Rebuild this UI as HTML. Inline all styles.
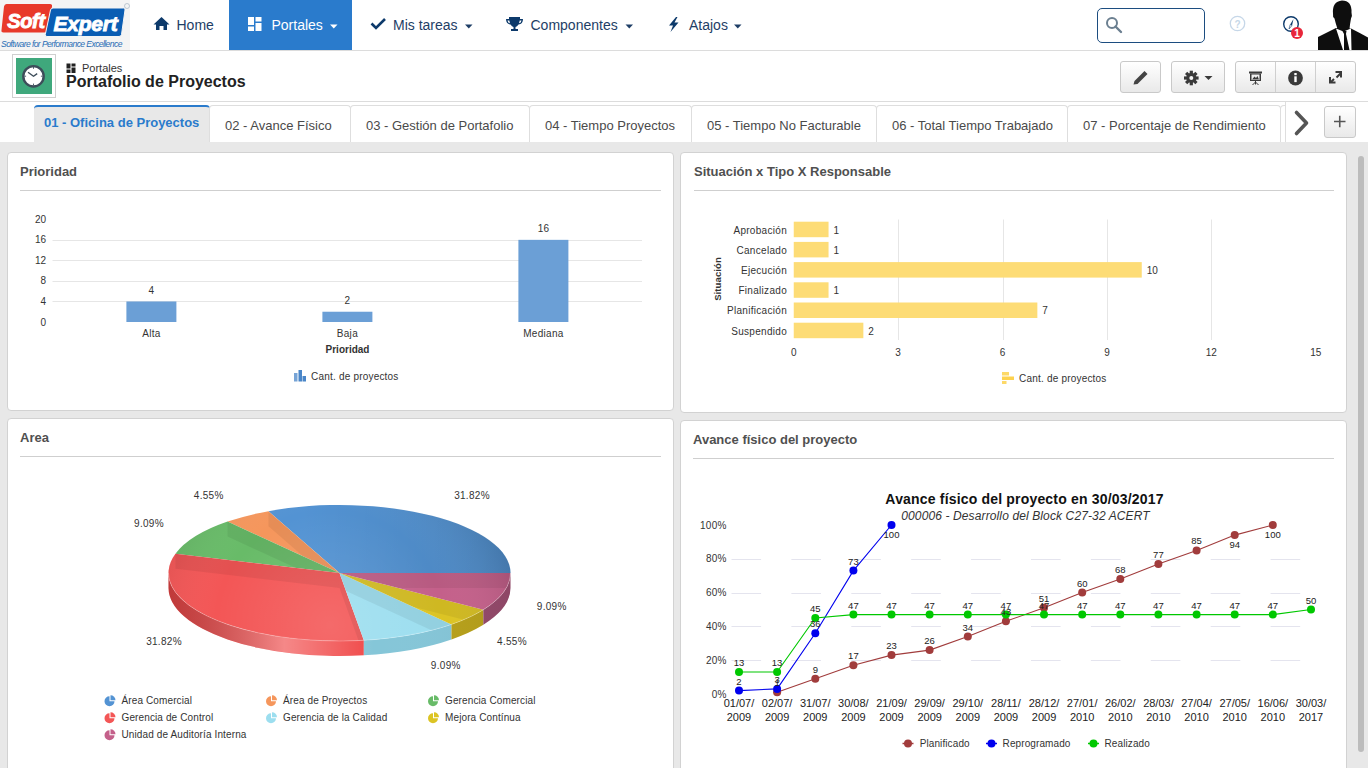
<!DOCTYPE html><html><head><meta charset="utf-8"><title>Portafolio de Proyectos</title><style>
*{margin:0;padding:0;box-sizing:border-box}
html,body{width:1368px;height:768px;overflow:hidden;background:#fff;font-family:"Liberation Sans",sans-serif}
.a{position:absolute}
.btn{position:absolute;background:linear-gradient(#ffffff,#e9e9e9);border:1px solid #c9c9c9;border-radius:3px}
.panel{position:absolute;background:#fff;border:1px solid #d2d2d2;border-radius:4px}
svg text{font-family:"Liberation Sans",sans-serif}
</style></head><body>
<div class="a" style="left:0;top:0;width:1368px;height:51px;background:#fff;border-bottom:1px solid #dcdcdc"></div>
<div class="a" style="left:0;top:0;width:130px;height:50px;background:#f4f4f4"></div>
<div class="a" style="left:229px;top:0;width:123px;height:50px;background:#2a7bcc"></div>
<div class="a" style="left:0;top:101px;width:1368px;height:1px;background:#dcdcdc"></div>
<div class="a" style="left:0;top:142px;width:1368px;height:626px;background:#e8e8e8"></div>
<div class="panel" style="left:7px;top:152px;width:667px;height:259px"></div>
<div class="panel" style="left:680px;top:152px;width:667px;height:261px"></div>
<div class="panel" style="left:7px;top:418px;width:667px;height:360px"></div>
<div class="panel" style="left:680px;top:420px;width:667px;height:360px"></div>
<div class="a" style="left:1358px;top:156px;width:6px;height:596px;background:#bcbcbc;border-radius:3px"></div>
<div class="btn" style="left:1120px;top:61px;width:41px;height:32px"></div>
<div class="btn" style="left:1171px;top:61px;width:54px;height:32px"></div>
<div class="btn" style="left:1235px;top:61px;width:121px;height:32px"></div>
<div class="a" style="left:1275px;top:62px;width:1px;height:30px;background:#cfcfcf"></div>
<div class="a" style="left:1315px;top:62px;width:1px;height:30px;background:#cfcfcf"></div>
<div class="btn" style="left:1324px;top:106px;width:32px;height:32px"></div>
<div class="a" style="left:1097px;top:8px;width:108px;height:35px;border:1.5px solid #1c4d80;border-radius:5px;background:#fff"></div>
<div class="a" style="left:12px;top:54px;width:44px;height:44px;border:1px solid #cfcfcf;background:#fff"></div>
<div class="a" style="left:16px;top:58px;width:36px;height:36px;background:#3fa87c"></div>
<div class="a" style="left:34px;top:105px;width:176px;height:37px;background:#e8e8e8;border-top:2px solid #2a7bcc;border-radius:4px 4px 0 0"></div>
<div class="a" style="left:209px;top:105px;width:142px;height:37px;background:#fff;border:1px solid #dedede;border-bottom:none;border-radius:4px 4px 0 0"></div>
<div class="a" style="left:350px;top:105px;width:180px;height:37px;background:#fff;border:1px solid #dedede;border-bottom:none;border-radius:4px 4px 0 0"></div>
<div class="a" style="left:529px;top:105px;width:163px;height:37px;background:#fff;border:1px solid #dedede;border-bottom:none;border-radius:4px 4px 0 0"></div>
<div class="a" style="left:691px;top:105px;width:186px;height:37px;background:#fff;border:1px solid #dedede;border-bottom:none;border-radius:4px 4px 0 0"></div>
<div class="a" style="left:876px;top:105px;width:192px;height:37px;background:#fff;border:1px solid #dedede;border-bottom:none;border-radius:4px 4px 0 0"></div>
<div class="a" style="left:1067px;top:105px;width:214px;height:37px;background:#fff;border:1px solid #dedede;border-bottom:none;border-radius:4px 4px 0 0"></div>
<div class="a" style="left:1280px;top:105px;width:121px;height:37px;background:#fff;border:1px solid #dedede;border-bottom:none;border-radius:4px 4px 0 0"></div>
<div class="a" style="left:1285px;top:102px;width:83px;height:40px;background:#fff;border-left:1px solid #dedede"></div>
<div class="btn" style="left:1324px;top:106px;width:32px;height:32px"></div>
<svg class="a" style="left:0;top:0" width="1368" height="768" viewBox="0 0 1368 768">
<path d="M6.5,4 H50 Q52.5,4 52,6.5 L47.5,30 Q47,32.5 44.5,32.5 H3.5 Q1,32.5 1.5,30 L4,6.5 Q4.5,4 6.5,4Z" fill="#e8392a"/>
<path d="M53,8 H123.5 Q125.5,8 125,10 L121.5,34.5 Q121,36.5 119,36.5 H47 Q45,36.5 45.3,34.5 L50.5,10 Q51,8 53,8Z" fill="#0a5db3" stroke="#f4f4f4" stroke-width="1"/>
<text x="26" y="27.5" font-size="20" fill="#fff" text-anchor="middle" font-weight="bold" font-style="italic" letter-spacing="-0.3" stroke="#fff" stroke-width="0.9">Soft</text>
<text x="85.5" y="30.5" font-size="21" fill="#fff" text-anchor="middle" font-weight="bold" font-style="italic" letter-spacing="-0.2" stroke="#fff" stroke-width="0.9">Expert</text>
<text x="1" y="46.5" font-size="8.6" fill="#2a6db5" text-anchor="start" font-weight="normal" font-style="italic" letter-spacing="-0.6">Software for Performance Excellence</text>
<circle cx="127" cy="6" r="2.5" fill="none" stroke="#9ab" stroke-width="0.6"/>
<path d="M161.5,17 L153.5,24.5 L156,24.5 L156,30 L159.5,30 L159.5,26 L163.5,26 L163.5,30 L167,30 L167,24.5 L169.5,24.5 Z" fill="#0d3a6b"/>
<text x="176.5" y="30" font-size="14" fill="#1e3e66" text-anchor="start" font-weight="normal" font-style="normal" >Home</text>
<g fill="#fff"><rect x="248" y="17" width="6" height="8"/><rect x="255.5" y="17" width="6" height="4.5"/><rect x="255.5" y="23" width="6" height="8"/><rect x="248" y="26.5" width="6" height="4.5"/></g>
<text x="271.5" y="30" font-size="14" fill="#fff" text-anchor="start" font-weight="normal" font-style="normal" >Portales</text>
<path d="M330,24.5 L337.5,24.5 L333.75,28.5Z" fill="#fff"/>
<path d="M371.5,23.5 L376,28 L385,19" fill="none" stroke="#0d3a6b" stroke-width="2.6"/>
<text x="393" y="30" font-size="14" fill="#1e3e66" text-anchor="start" font-weight="normal" font-style="normal" >Mis tareas</text>
<path d="M465,24.5 L472.5,24.5 L468.75,28.5Z" fill="#1e3e66"/>
<path d="M509,17 L520,17 L520,19 L523,19 Q523,24 518.5,24.5 Q517,26.5 515.5,27 L515.5,29 L518,29 L518,31 L511,31 L511,29 L513.5,29 L513.5,27 Q512,26.5 510.5,24.5 Q506,24 506,19 L509,19Z M507.5,20.5 Q507.8,23 510,23.2 L509.3,20.5Z M521.5,20.5 L519.7,20.5 L519,23.2 Q521.2,23 521.5,20.5Z" fill="#0d3a6b" fill-rule="evenodd"/>
<text x="530.5" y="30" font-size="14" fill="#1e3e66" text-anchor="start" font-weight="normal" font-style="normal" >Componentes</text>
<path d="M625.5,24.5 L633,24.5 L629.25,28.5Z" fill="#1e3e66"/>
<path d="M676,17 L669,25.5 L673,25.5 L670.5,32 L678.5,22.5 L674.5,22.5 L677.5,17Z" fill="#0d3a6b"/>
<text x="689" y="30" font-size="14" fill="#1e3e66" text-anchor="start" font-weight="normal" font-style="normal" >Atajos</text>
<path d="M734,24.5 L741.5,24.5 L737.75,28.5Z" fill="#1e3e66"/>
<circle cx="1112" cy="23" r="5" fill="none" stroke="#6b7f90" stroke-width="2"/><path d="M1115.5,26.5 L1121,32" stroke="#6b7f90" stroke-width="2.4" stroke-linecap="round"/>
<circle cx="1237.5" cy="23.5" r="7.2" fill="none" stroke="#c6d7e8" stroke-width="1.3"/>
<text x="1237.5" y="27.5" font-size="10" fill="#c6d7e8" text-anchor="middle" font-weight="bold" font-style="normal" >?</text>
<circle cx="1291" cy="24" r="7.3" fill="none" stroke="#0d3a6b" stroke-width="1.4"/><path d="M1293.5,19 L1290.2,24.5 L1292,25.5Z" fill="#0d3a6b"/><path d="M1290.2,24.5 L1289,29 L1292,25.5Z" fill="#fff" stroke="#0d3a6b" stroke-width="0.6"/>
<circle cx="1297" cy="33" r="6" fill="#e8263a"/>
<text x="1297" y="36.8" font-size="10" fill="#fff" text-anchor="middle" font-weight="bold" font-style="normal" >1</text>
<path d="M1318,50 V37 Q1326,33 1336,28 L1351,28.5 Q1360,33 1368,37.5 V50Z" fill="#0e0e0e"/>
<path d="M1337.5,29 Q1335.5,23 1334.5,18.5 Q1332.5,17 1333,13.5 Q1332,1.5 1342,0.5 Q1352,0.5 1351.5,12.5 Q1352.5,16 1351,18.5 Q1350,23.5 1349.5,29 Q1344,31 1337.5,29Z" fill="#0e0e0e"/>
<path d="M1336,28.5 L1343.5,31.5 L1351,28.5 L1351.5,50 L1343,50Z" fill="#fff"/><path d="M1342.5,31 L1346.5,31 L1346,34 L1349.5,50 L1344,50 L1344,34Z" fill="#0e0e0e"/>
<circle cx="33.5" cy="76.3" r="10.2" fill="#fff" stroke="#3d4d5a" stroke-width="2.4"/>
<path d="M28,72.3 L33.5,76.2 L37.2,73.6" fill="none" stroke="#3d4d5a" stroke-width="1.4" stroke-linejoin="round"/>
<g stroke="#3d4d5a" stroke-width="0.9"><path d="M33.5,67 V68.8"/><path d="M33.5,83.6 V85.4"/><path d="M24.3,76.2 H26.1"/><path d="M40.9,76.2 H42.7"/></g>
<g fill="#222"><rect x="66.5" y="63.5" width="4" height="5"/><rect x="71.5" y="63.5" width="4" height="3"/><rect x="71.5" y="67.5" width="4" height="5.5"/><rect x="66.5" y="69.5" width="4" height="3.5"/></g>
<text x="82" y="71.7" font-size="11" fill="#333" text-anchor="start" font-weight="normal" font-style="normal" >Portales</text>
<text x="66" y="87" font-size="16" fill="#222" text-anchor="start" font-weight="bold" font-style="normal" >Portafolio de Proyectos</text>
<path d="M1133.5,84.5 L1134.5,81 L1144.5,71 L1147.5,74 L1137.5,84 Z" fill="#444"/>
<g fill="#3a3a3a"><rect x="1189.7" y="70.7" width="3.2" height="3.5" transform="rotate(0 1191.3 78)"/><rect x="1189.7" y="70.7" width="3.2" height="3.5" transform="rotate(45 1191.3 78)"/><rect x="1189.7" y="70.7" width="3.2" height="3.5" transform="rotate(90 1191.3 78)"/><rect x="1189.7" y="70.7" width="3.2" height="3.5" transform="rotate(135 1191.3 78)"/><rect x="1189.7" y="70.7" width="3.2" height="3.5" transform="rotate(180 1191.3 78)"/><rect x="1189.7" y="70.7" width="3.2" height="3.5" transform="rotate(225 1191.3 78)"/><rect x="1189.7" y="70.7" width="3.2" height="3.5" transform="rotate(270 1191.3 78)"/><rect x="1189.7" y="70.7" width="3.2" height="3.5" transform="rotate(315 1191.3 78)"/><circle cx="1191.3" cy="78" r="5"/></g><circle cx="1191.3" cy="78" r="2" fill="#f3f3f3"/>
<path d="M1204.5,76 L1212.5,76 L1208.5,80Z" fill="#3a3a3a"/>
<g fill="#3a3a3a"><rect x="1249" y="71.5" width="13" height="2"/><rect x="1250" y="73.5" width="11" height="7.5"/></g><rect x="1251.5" y="74.5" width="8" height="5.5" fill="#f0f0f0"/><path d="M1252,79.5 L1254.5,76.5 L1256,78 L1257.5,76 L1259,79.5Z" fill="#3a3a3a"/><path d="M1255.5,81 V84.5 M1255.5,82 L1252.5,85 M1255.5,82 L1258.5,85" stroke="#3a3a3a" stroke-width="1"/>
<circle cx="1295.5" cy="78" r="7.4" fill="#3a3a3a"/><rect x="1294.3" y="73" width="2.4" height="2.2" fill="#fff"/><rect x="1294.3" y="76.3" width="2.4" height="5.8" fill="#fff"/>
<g fill="none" stroke="#3a3a3a" stroke-width="2"><path d="M1336.5,77.5 L1340.5,73.5"/><path d="M1335.5,72 H1341 V77.5"/><path d="M1334,79 L1331,82"/><path d="M1330,77 V82.5 H1335.5"/></g>
<text x="44" y="127" font-size="13" fill="#2a7bcc" text-anchor="start" font-weight="bold" font-style="normal" >01 - Oficina de Proyectos</text>
<text x="225" y="130" font-size="13" fill="#4a4a4a" text-anchor="start" font-weight="normal" font-style="normal" >02 - Avance Físico</text>
<text x="366" y="130" font-size="13" fill="#4a4a4a" text-anchor="start" font-weight="normal" font-style="normal" >03 - Gestión de Portafolio</text>
<text x="545" y="130" font-size="13" fill="#4a4a4a" text-anchor="start" font-weight="normal" font-style="normal" >04 - Tiempo Proyectos</text>
<text x="707" y="130" font-size="13" fill="#4a4a4a" text-anchor="start" font-weight="normal" font-style="normal" >05 - Tiempo No Facturable</text>
<text x="892" y="130" font-size="13" fill="#4a4a4a" text-anchor="start" font-weight="normal" font-style="normal" >06 - Total Tiempo Trabajado</text>
<text x="1083" y="130" font-size="13" fill="#4a4a4a" text-anchor="start" font-weight="normal" font-style="normal" >07 - Porcentaje de Rendimiento</text>
<path d="M1296.5,112.5 L1306.5,123 L1296.5,133.5" fill="none" stroke="#555" stroke-width="3.6" stroke-linecap="round" stroke-linejoin="round"/>
<path d="M1334,121.5 H1345.5 M1339.75,115.8 V127.2" stroke="#555" stroke-width="1.6"/>
<text x="20" y="176" font-size="13" fill="#505050" text-anchor="start" font-weight="bold" font-style="normal" >Prioridad</text>
<rect x="20" y="190" width="641" height="1" fill="#cfcfcf"/>
<text x="694" y="176" font-size="13" fill="#505050" text-anchor="start" font-weight="bold" font-style="normal" >Situación x Tipo X Responsable</text>
<rect x="694" y="190" width="640" height="1" fill="#cfcfcf"/>
<text x="20" y="442" font-size="13" fill="#505050" text-anchor="start" font-weight="bold" font-style="normal" >Area</text>
<rect x="20" y="456" width="641" height="1" fill="#cfcfcf"/>
<text x="693" y="444" font-size="13" fill="#505050" text-anchor="start" font-weight="bold" font-style="normal" >Avance físico del proyecto</text>
<rect x="693" y="458" width="641" height="1" fill="#cfcfcf"/>
<path d="M52.5,301.5 H642" stroke="#e6e6e6" stroke-width="1"/>
<path d="M52.5,281.5 H642" stroke="#e6e6e6" stroke-width="1"/>
<path d="M52.5,260.5 H642" stroke="#e6e6e6" stroke-width="1"/>
<path d="M52.5,240.5 H642" stroke="#e6e6e6" stroke-width="1"/>
<text x="46" y="325.5" font-size="10" fill="#333" text-anchor="end" font-weight="normal" font-style="normal" >0</text>
<text x="46" y="304.96" font-size="10" fill="#333" text-anchor="end" font-weight="normal" font-style="normal" >4</text>
<text x="46" y="284.42" font-size="10" fill="#333" text-anchor="end" font-weight="normal" font-style="normal" >8</text>
<text x="46" y="263.88" font-size="10" fill="#333" text-anchor="end" font-weight="normal" font-style="normal" >12</text>
<text x="46" y="243.34" font-size="10" fill="#333" text-anchor="end" font-weight="normal" font-style="normal" >16</text>
<text x="46" y="222.8" font-size="10" fill="#333" text-anchor="end" font-weight="normal" font-style="normal" >20</text>
<rect x="126.4" y="301.46" width="50" height="20.54" fill="#6b9fd6"/>
<text x="151.4" y="293.96" font-size="10" fill="#333" text-anchor="middle" font-weight="normal" font-style="normal" >4</text>
<text x="151.4" y="336.5" font-size="10" fill="#333" text-anchor="middle" font-weight="normal" font-style="normal" letter-spacing="0.3">Alta</text>
<rect x="322.4" y="311.73" width="50" height="10.27" fill="#6b9fd6"/>
<text x="347.4" y="304.23" font-size="10" fill="#333" text-anchor="middle" font-weight="normal" font-style="normal" >2</text>
<text x="347.4" y="336.5" font-size="10" fill="#333" text-anchor="middle" font-weight="normal" font-style="normal" letter-spacing="0.3">Baja</text>
<rect x="518.4" y="239.84" width="50" height="82.16" fill="#6b9fd6"/>
<text x="543.4" y="232.34" font-size="10" fill="#333" text-anchor="middle" font-weight="normal" font-style="normal" >16</text>
<text x="543.4" y="336.5" font-size="10" fill="#333" text-anchor="middle" font-weight="normal" font-style="normal" letter-spacing="0.3">Mediana</text>
<text x="347.5" y="353" font-size="10" fill="#333" text-anchor="middle" font-weight="bold" font-style="normal" >Prioridad</text>
<g fill="#4a86c8"><rect x="294" y="373" width="3.5" height="8.5" opacity="0.75"/><rect x="298.5" y="370" width="3.5" height="11.5"/><rect x="302.5" y="376" width="3.5" height="5.5"/></g>
<text x="311" y="380" font-size="10" fill="#333" text-anchor="start" font-weight="normal" font-style="normal" letter-spacing="0.2">Cant. de proyectos</text>
<path d="M898.5,219.5 V340" stroke="#e6e6e6" stroke-width="1"/>
<path d="M1003.5,219.5 V340" stroke="#e6e6e6" stroke-width="1"/>
<path d="M1107.5,219.5 V340" stroke="#e6e6e6" stroke-width="1"/>
<path d="M1211.5,219.5 V340" stroke="#e6e6e6" stroke-width="1"/>
<text x="793.75" y="355.5" font-size="10" fill="#333" text-anchor="middle" font-weight="normal" font-style="normal" >0</text>
<text x="898.15" y="355.5" font-size="10" fill="#333" text-anchor="middle" font-weight="normal" font-style="normal" >3</text>
<text x="1002.55" y="355.5" font-size="10" fill="#333" text-anchor="middle" font-weight="normal" font-style="normal" >6</text>
<text x="1106.95" y="355.5" font-size="10" fill="#333" text-anchor="middle" font-weight="normal" font-style="normal" >9</text>
<text x="1211.35" y="355.5" font-size="10" fill="#333" text-anchor="middle" font-weight="normal" font-style="normal" >12</text>
<text x="1315.75" y="355.5" font-size="10" fill="#333" text-anchor="middle" font-weight="normal" font-style="normal" >15</text>
<rect x="793.75" y="221.7" width="34.8" height="15.5" fill="#fddc76"/>
<text x="787" y="233.5" font-size="10" fill="#333" text-anchor="end" font-weight="normal" font-style="normal" letter-spacing="0.3">Aprobación</text>
<text x="833.55" y="233.5" font-size="10" fill="#333" text-anchor="start" font-weight="normal" font-style="normal" >1</text>
<rect x="793.75" y="241.9" width="34.8" height="15.5" fill="#fddc76"/>
<text x="787" y="253.7" font-size="10" fill="#333" text-anchor="end" font-weight="normal" font-style="normal" letter-spacing="0.3">Cancelado</text>
<text x="833.55" y="253.7" font-size="10" fill="#333" text-anchor="start" font-weight="normal" font-style="normal" >1</text>
<rect x="793.75" y="262.1" width="348.0" height="15.5" fill="#fddc76"/>
<text x="787" y="273.9" font-size="10" fill="#333" text-anchor="end" font-weight="normal" font-style="normal" letter-spacing="0.3">Ejecución</text>
<text x="1146.75" y="273.9" font-size="10" fill="#333" text-anchor="start" font-weight="normal" font-style="normal" >10</text>
<rect x="793.75" y="282.3" width="34.8" height="15.5" fill="#fddc76"/>
<text x="787" y="294.09999999999997" font-size="10" fill="#333" text-anchor="end" font-weight="normal" font-style="normal" letter-spacing="0.3">Finalizado</text>
<text x="833.55" y="294.09999999999997" font-size="10" fill="#333" text-anchor="start" font-weight="normal" font-style="normal" >1</text>
<rect x="793.75" y="302.5" width="243.6" height="15.5" fill="#fddc76"/>
<text x="787" y="314.3" font-size="10" fill="#333" text-anchor="end" font-weight="normal" font-style="normal" letter-spacing="0.3">Planificación</text>
<text x="1042.35" y="314.3" font-size="10" fill="#333" text-anchor="start" font-weight="normal" font-style="normal" >7</text>
<rect x="793.75" y="322.7" width="69.6" height="15.5" fill="#fddc76"/>
<text x="787" y="334.5" font-size="10" fill="#333" text-anchor="end" font-weight="normal" font-style="normal" letter-spacing="0.3">Suspendido</text>
<text x="868.35" y="334.5" font-size="10" fill="#333" text-anchor="start" font-weight="normal" font-style="normal" >2</text>
<text x="721" y="279" font-size="9.5" font-weight="bold" fill="#333" letter-spacing="0.1" text-anchor="middle" transform="rotate(-90 721 279)">Situación</text>
<g fill="#fdd24e"><rect x="1002" y="372" width="7" height="3.5" opacity="0.85"/><rect x="1002" y="376.5" width="12" height="3.5"/><rect x="1002" y="381" width="4.5" height="3" opacity="0.85"/></g>
<text x="1019" y="382" font-size="10" fill="#333" text-anchor="start" font-weight="normal" font-style="normal" letter-spacing="0.2">Cant. de proyectos</text>
<defs><linearGradient id="sideg" gradientUnits="userSpaceOnUse" x1="168" x2="511" y1="0" y2="0"><stop offset="0" stop-color="#000" stop-opacity="0.2"/><stop offset="0.34" stop-color="#fff" stop-opacity="0.35"/><stop offset="0.6" stop-color="#fff" stop-opacity="0"/><stop offset="1" stop-color="#000" stop-opacity="0.05"/></linearGradient><radialGradient id="topg" gradientUnits="userSpaceOnUse" cx="330" cy="625" r="190"><stop offset="0" stop-color="#fff" stop-opacity="0.12"/><stop offset="0.6" stop-color="#fff" stop-opacity="0"/><stop offset="1" stop-color="#000" stop-opacity="0.1"/></radialGradient></defs>
<path d="M168.50,573.00 A171.0,68.0 0 0 0 363.84,640.31 L363.84,655.31 A171.0,68.0 0 0 1 168.50,588.00 Z" fill="#f04848"/>
<path d="M363.84,640.31 A171.0,68.0 0 0 0 451.48,624.39 L451.48,639.39 A171.0,68.0 0 0 1 363.84,655.31 Z" fill="#85c6d8"/>
<path d="M451.48,624.39 A171.0,68.0 0 0 0 483.35,609.76 L483.35,624.76 A171.0,68.0 0 0 1 451.48,639.39 Z" fill="#b8a11a"/>
<path d="M483.35,609.76 A171.0,68.0 0 0 0 510.50,573.00 L510.50,588.00 A171.0,68.0 0 0 1 483.35,624.76 Z" fill="#954a6b"/>
<path d="M168.5,573.0 A171.0,68.0 0 0 0 510.5,573.0 L510.5,588.0 A171.0,68.0 0 0 1 168.5,588.0 Z" fill="url(#sideg)"/>
<path d="M339.5,573.0 L510.50,573.00 A171.0,68.0 0 0 0 268.46,511.15 Z" fill="#5393d3"/>
<path d="M339.5,573.0 L268.46,511.15 A171.0,68.0 0 0 0 227.52,521.61 Z" fill="#f5965c"/>
<path d="M339.5,573.0 L227.52,521.61 A171.0,68.0 0 0 0 175.43,553.84 Z" fill="#68bb68"/>
<path d="M339.5,573.0 L175.43,553.84 A171.0,68.0 0 0 0 363.84,640.31 Z" fill="#f35656"/>
<path d="M339.5,573.0 L363.84,640.31 A171.0,68.0 0 0 0 451.48,624.39 Z" fill="#9cdeef"/>
<path d="M339.5,573.0 L451.48,624.39 A171.0,68.0 0 0 0 483.35,609.76 Z" fill="#dcc424"/>
<path d="M339.5,573.0 L483.35,609.76 A171.0,68.0 0 0 0 510.50,573.00 Z" fill="#c4608a"/>
<ellipse cx="339.5" cy="573.0" rx="171.0" ry="68.0" fill="url(#topg)"/>
<defs><linearGradient id="topg2" gradientUnits="userSpaceOnUse" x1="300" x2="511" y1="0" y2="0"><stop offset="0" stop-color="#000" stop-opacity="0"/><stop offset="1" stop-color="#000" stop-opacity="0.1"/></linearGradient></defs><path d="M339.5,573.0 L510.5,573.0 A171.0,68.0 0 0 0 267.7,511.1 Z" fill="url(#topg2)"/>
<defs><clipPath id="cl0"><path d="M339.5,573.0 L510.50,573.00 A171.0,68.0 0 0 0 268.46,511.15 Z"/></clipPath><clipPath id="cl1"><path d="M339.5,573.0 L268.46,511.15 A171.0,68.0 0 0 0 227.52,521.61 Z"/></clipPath><clipPath id="cl2"><path d="M339.5,573.0 L227.52,521.61 A171.0,68.0 0 0 0 175.43,553.84 Z"/></clipPath><clipPath id="cl3"><path d="M339.5,573.0 L175.43,553.84 A171.0,68.0 0 0 0 363.84,640.31 Z"/></clipPath><clipPath id="cl4"><path d="M339.5,573.0 L363.84,640.31 A171.0,68.0 0 0 0 451.48,624.39 Z"/></clipPath><clipPath id="cl5"><path d="M339.5,573.0 L451.48,624.39 A171.0,68.0 0 0 0 483.35,609.76 Z"/></clipPath><clipPath id="cl6"><path d="M339.5,573.0 L483.35,609.76 A171.0,68.0 0 0 0 510.50,573.00 Z"/></clipPath></defs>
<path clip-path="url(#cl6)" d="M339.5,573.0 L510.50,573.00 L510.50,588.00 L339.5,588.0 Z" fill="#000" fill-opacity="0.06"/>
<path clip-path="url(#cl1)" d="M339.5,573.0 L268.46,511.15 L268.46,526.15 L339.5,588.0 Z" fill="#000" fill-opacity="0.06"/>
<path clip-path="url(#cl2)" d="M339.5,573.0 L227.52,521.61 L227.52,536.61 L339.5,588.0 Z" fill="#000" fill-opacity="0.06"/>
<path clip-path="url(#cl3)" d="M339.5,573.0 L175.43,553.84 L175.43,568.84 L339.5,588.0 Z" fill="#000" fill-opacity="0.06"/>
<path clip-path="url(#cl3)" d="M339.5,573.0 L363.84,640.31 L363.84,655.31 L339.5,588.0 Z" fill="#000" fill-opacity="0.06"/>
<path clip-path="url(#cl4)" d="M339.5,573.0 L451.48,624.39 L451.48,639.39 L339.5,588.0 Z" fill="#000" fill-opacity="0.06"/>
<path clip-path="url(#cl5)" d="M339.5,573.0 L483.35,609.76 L483.35,624.76 L339.5,588.0 Z" fill="#000" fill-opacity="0.06"/>
<path d="M168.5,573.0 A171.0,68.0 0 0 0 510.5,573.0" fill="none" stroke="#fff" stroke-opacity="0.25" stroke-width="1"/>
<text x="472" y="499" font-size="10" fill="#333" text-anchor="middle" font-weight="normal" font-style="normal" letter-spacing="0.3">31.82%</text>
<text x="208.7" y="499" font-size="10" fill="#333" text-anchor="middle" font-weight="normal" font-style="normal" letter-spacing="0.3">4.55%</text>
<text x="149" y="527" font-size="10" fill="#333" text-anchor="middle" font-weight="normal" font-style="normal" letter-spacing="0.3">9.09%</text>
<text x="551.7" y="610" font-size="10" fill="#333" text-anchor="middle" font-weight="normal" font-style="normal" letter-spacing="0.3">9.09%</text>
<text x="512" y="645" font-size="10" fill="#333" text-anchor="middle" font-weight="normal" font-style="normal" letter-spacing="0.3">4.55%</text>
<text x="445.8" y="668.5" font-size="10" fill="#333" text-anchor="middle" font-weight="normal" font-style="normal" letter-spacing="0.3">9.09%</text>
<text x="164" y="645" font-size="10" fill="#333" text-anchor="middle" font-weight="normal" font-style="normal" letter-spacing="0.3">31.82%</text>
<path d="M109.5,701.3 L109.5,696.3 A5,5 0 1 0 114.5,701.3 Z" fill="#5393d3"/><path d="M110.5,700.3 L110.5,695.3 A5,5 0 0 1 115.5,700.3 Z" fill="#5393d3"/>
<text x="121.5" y="704.0" font-size="10" fill="#333" text-anchor="start" font-weight="normal" font-style="normal" letter-spacing="0.12">Área Comercial</text>
<path d="M271,701.3 L271,696.3 A5,5 0 1 0 276,701.3 Z" fill="#f5965c"/><path d="M272,700.3 L272,695.3 A5,5 0 0 1 277,700.3 Z" fill="#f5965c"/>
<text x="283" y="704.0" font-size="10" fill="#333" text-anchor="start" font-weight="normal" font-style="normal" letter-spacing="0.12">Área de Proyectos</text>
<path d="M433,701.3 L433,696.3 A5,5 0 1 0 438,701.3 Z" fill="#68bb68"/><path d="M434,700.3 L434,695.3 A5,5 0 0 1 439,700.3 Z" fill="#68bb68"/>
<text x="445" y="704.0" font-size="10" fill="#333" text-anchor="start" font-weight="normal" font-style="normal" letter-spacing="0.12">Gerencia Comercial</text>
<path d="M109.5,718.3 L109.5,713.3 A5,5 0 1 0 114.5,718.3 Z" fill="#f35656"/><path d="M110.5,717.3 L110.5,712.3 A5,5 0 0 1 115.5,717.3 Z" fill="#f35656"/>
<text x="121.5" y="721.0" font-size="10" fill="#333" text-anchor="start" font-weight="normal" font-style="normal" letter-spacing="0.12">Gerencia de Control</text>
<path d="M271,718.3 L271,713.3 A5,5 0 1 0 276,718.3 Z" fill="#9cdeef"/><path d="M272,717.3 L272,712.3 A5,5 0 0 1 277,717.3 Z" fill="#9cdeef"/>
<text x="283" y="721.0" font-size="10" fill="#333" text-anchor="start" font-weight="normal" font-style="normal" letter-spacing="0.12">Gerencia de la Calidad</text>
<path d="M433,718.3 L433,713.3 A5,5 0 1 0 438,718.3 Z" fill="#dcc424"/><path d="M434,717.3 L434,712.3 A5,5 0 0 1 439,717.3 Z" fill="#dcc424"/>
<text x="445" y="721.0" font-size="10" fill="#333" text-anchor="start" font-weight="normal" font-style="normal" letter-spacing="0.12">Mejora Contínua</text>
<path d="M109.5,735.3 L109.5,730.3 A5,5 0 1 0 114.5,735.3 Z" fill="#c4608a"/><path d="M110.5,734.3 L110.5,729.3 A5,5 0 0 1 115.5,734.3 Z" fill="#c4608a"/>
<text x="121.5" y="738.0" font-size="10" fill="#333" text-anchor="start" font-weight="normal" font-style="normal" letter-spacing="0.12">Unidad de Auditoría Interna</text>
<text x="1024.5" y="504" font-size="14" fill="#111" text-anchor="middle" font-weight="bold" font-style="normal" letter-spacing="0.18">Avance físico del proyecto en 30/03/2017</text>
<text x="1025.5" y="519.5" font-size="12" fill="#333" text-anchor="middle" font-weight="normal" font-style="italic" letter-spacing="0.12">000006 - Desarrollo del Block C27-32 ACERT</text>
<path d="M731.5,660.5 H1300.5" stroke="#e4e4ee" stroke-width="1" stroke-dasharray="29.6,30.3"/>
<path d="M731.5,626.5 H1300.5" stroke="#e4e4ee" stroke-width="1" stroke-dasharray="29.6,30.3"/>
<path d="M731.5,593.5 H1300.5" stroke="#e4e4ee" stroke-width="1" stroke-dasharray="29.6,30.3"/>
<path d="M731.5,559.5 H1300.5" stroke="#e4e4ee" stroke-width="1" stroke-dasharray="29.6,30.3"/>
<text x="726.5" y="697.5" font-size="10" fill="#333" text-anchor="end" font-weight="normal" font-style="normal" letter-spacing="0.2">0%</text>
<text x="726.5" y="663.7" font-size="10" fill="#333" text-anchor="end" font-weight="normal" font-style="normal" letter-spacing="0.2">20%</text>
<text x="726.5" y="629.9" font-size="10" fill="#333" text-anchor="end" font-weight="normal" font-style="normal" letter-spacing="0.2">40%</text>
<text x="726.5" y="596.1" font-size="10" fill="#333" text-anchor="end" font-weight="normal" font-style="normal" letter-spacing="0.2">60%</text>
<text x="726.5" y="562.3" font-size="10" fill="#333" text-anchor="end" font-weight="normal" font-style="normal" letter-spacing="0.2">80%</text>
<text x="726.5" y="528.5" font-size="10" fill="#333" text-anchor="end" font-weight="normal" font-style="normal" letter-spacing="0.2">100%</text>
<text x="739.0" y="707" font-size="11" fill="#222" text-anchor="middle" font-weight="normal" font-style="normal" >01/07/</text>
<text x="739.0" y="721" font-size="11" fill="#222" text-anchor="middle" font-weight="normal" font-style="normal" >2009</text>
<text x="777.13" y="707" font-size="11" fill="#222" text-anchor="middle" font-weight="normal" font-style="normal" >02/07/</text>
<text x="777.13" y="721" font-size="11" fill="#222" text-anchor="middle" font-weight="normal" font-style="normal" >2009</text>
<text x="815.26" y="707" font-size="11" fill="#222" text-anchor="middle" font-weight="normal" font-style="normal" >31/07/</text>
<text x="815.26" y="721" font-size="11" fill="#222" text-anchor="middle" font-weight="normal" font-style="normal" >2009</text>
<text x="853.39" y="707" font-size="11" fill="#222" text-anchor="middle" font-weight="normal" font-style="normal" >30/08/</text>
<text x="853.39" y="721" font-size="11" fill="#222" text-anchor="middle" font-weight="normal" font-style="normal" >2009</text>
<text x="891.52" y="707" font-size="11" fill="#222" text-anchor="middle" font-weight="normal" font-style="normal" >21/09/</text>
<text x="891.52" y="721" font-size="11" fill="#222" text-anchor="middle" font-weight="normal" font-style="normal" >2009</text>
<text x="929.65" y="707" font-size="11" fill="#222" text-anchor="middle" font-weight="normal" font-style="normal" >29/09/</text>
<text x="929.65" y="721" font-size="11" fill="#222" text-anchor="middle" font-weight="normal" font-style="normal" >2009</text>
<text x="967.78" y="707" font-size="11" fill="#222" text-anchor="middle" font-weight="normal" font-style="normal" >29/10/</text>
<text x="967.78" y="721" font-size="11" fill="#222" text-anchor="middle" font-weight="normal" font-style="normal" >2009</text>
<text x="1005.9100000000001" y="707" font-size="11" fill="#222" text-anchor="middle" font-weight="normal" font-style="normal" >28/11/</text>
<text x="1005.9100000000001" y="721" font-size="11" fill="#222" text-anchor="middle" font-weight="normal" font-style="normal" >2009</text>
<text x="1044.04" y="707" font-size="11" fill="#222" text-anchor="middle" font-weight="normal" font-style="normal" >28/12/</text>
<text x="1044.04" y="721" font-size="11" fill="#222" text-anchor="middle" font-weight="normal" font-style="normal" >2009</text>
<text x="1082.17" y="707" font-size="11" fill="#222" text-anchor="middle" font-weight="normal" font-style="normal" >27/01/</text>
<text x="1082.17" y="721" font-size="11" fill="#222" text-anchor="middle" font-weight="normal" font-style="normal" >2010</text>
<text x="1120.3" y="707" font-size="11" fill="#222" text-anchor="middle" font-weight="normal" font-style="normal" >26/02/</text>
<text x="1120.3" y="721" font-size="11" fill="#222" text-anchor="middle" font-weight="normal" font-style="normal" >2010</text>
<text x="1158.43" y="707" font-size="11" fill="#222" text-anchor="middle" font-weight="normal" font-style="normal" >28/03/</text>
<text x="1158.43" y="721" font-size="11" fill="#222" text-anchor="middle" font-weight="normal" font-style="normal" >2010</text>
<text x="1196.56" y="707" font-size="11" fill="#222" text-anchor="middle" font-weight="normal" font-style="normal" >27/04/</text>
<text x="1196.56" y="721" font-size="11" fill="#222" text-anchor="middle" font-weight="normal" font-style="normal" >2010</text>
<text x="1234.69" y="707" font-size="11" fill="#222" text-anchor="middle" font-weight="normal" font-style="normal" >27/05/</text>
<text x="1234.69" y="721" font-size="11" fill="#222" text-anchor="middle" font-weight="normal" font-style="normal" >2010</text>
<text x="1272.8200000000002" y="707" font-size="11" fill="#222" text-anchor="middle" font-weight="normal" font-style="normal" >16/06/</text>
<text x="1272.8200000000002" y="721" font-size="11" fill="#222" text-anchor="middle" font-weight="normal" font-style="normal" >2010</text>
<text x="1310.95" y="707" font-size="11" fill="#222" text-anchor="middle" font-weight="normal" font-style="normal" >30/03/</text>
<text x="1310.95" y="721" font-size="11" fill="#222" text-anchor="middle" font-weight="normal" font-style="normal" >2017</text>
<polyline points="777.1,692.3 815.3,678.8 853.4,665.3 891.5,655.1 929.6,650.1 967.8,636.5 1005.9,621.3 1044.0,607.8 1082.2,592.6 1120.3,579.1 1158.4,563.9 1196.6,550.4 1234.7,535.1 1272.8,525.0" fill="none" stroke="#a13c3c" stroke-width="1.1"/>
<polyline points="739.0,690.6 777.1,688.9 815.3,633.2 853.4,570.6 891.5,525.0" fill="none" stroke="#0000ee" stroke-width="1.1"/>
<polyline points="739.0,672.0 777.1,672.0 815.3,618.0 853.4,614.6 891.5,614.6 929.6,614.6 967.8,614.6 1005.9,614.6 1044.0,614.6 1082.2,614.6 1120.3,614.6 1158.4,614.6 1196.6,614.6 1234.7,614.6 1272.8,614.6 1311.0,609.5" fill="none" stroke="#00c800" stroke-width="1.1"/>
<circle cx="777.1" cy="692.3" r="4" fill="#a13c3c"/>
<circle cx="815.3" cy="678.8" r="4" fill="#a13c3c"/>
<circle cx="853.4" cy="665.3" r="4" fill="#a13c3c"/>
<circle cx="891.5" cy="655.1" r="4" fill="#a13c3c"/>
<circle cx="929.6" cy="650.1" r="4" fill="#a13c3c"/>
<circle cx="967.8" cy="636.5" r="4" fill="#a13c3c"/>
<circle cx="1005.9" cy="621.3" r="4" fill="#a13c3c"/>
<circle cx="1044.0" cy="607.8" r="4" fill="#a13c3c"/>
<circle cx="1082.2" cy="592.6" r="4" fill="#a13c3c"/>
<circle cx="1120.3" cy="579.1" r="4" fill="#a13c3c"/>
<circle cx="1158.4" cy="563.9" r="4" fill="#a13c3c"/>
<circle cx="1196.6" cy="550.4" r="4" fill="#a13c3c"/>
<circle cx="1234.7" cy="535.1" r="4" fill="#a13c3c"/>
<circle cx="1272.8" cy="525.0" r="4" fill="#a13c3c"/>
<circle cx="739.0" cy="690.6" r="4" fill="#0000ee"/>
<circle cx="777.1" cy="688.9" r="4" fill="#0000ee"/>
<circle cx="815.3" cy="633.2" r="4" fill="#0000ee"/>
<circle cx="853.4" cy="570.6" r="4" fill="#0000ee"/>
<circle cx="891.5" cy="525.0" r="4" fill="#0000ee"/>
<circle cx="739.0" cy="672.0" r="4" fill="#00c800"/>
<circle cx="777.1" cy="672.0" r="4" fill="#00c800"/>
<circle cx="815.3" cy="618.0" r="4" fill="#00c800"/>
<circle cx="853.4" cy="614.6" r="4" fill="#00c800"/>
<circle cx="891.5" cy="614.6" r="4" fill="#00c800"/>
<circle cx="929.6" cy="614.6" r="4" fill="#00c800"/>
<circle cx="967.8" cy="614.6" r="4" fill="#00c800"/>
<circle cx="1005.9" cy="614.6" r="4" fill="#00c800"/>
<circle cx="1044.0" cy="614.6" r="4" fill="#00c800"/>
<circle cx="1082.2" cy="614.6" r="4" fill="#00c800"/>
<circle cx="1120.3" cy="614.6" r="4" fill="#00c800"/>
<circle cx="1158.4" cy="614.6" r="4" fill="#00c800"/>
<circle cx="1196.6" cy="614.6" r="4" fill="#00c800"/>
<circle cx="1234.7" cy="614.6" r="4" fill="#00c800"/>
<circle cx="1272.8" cy="614.6" r="4" fill="#00c800"/>
<circle cx="1311.0" cy="609.5" r="4" fill="#00c800"/>
<text x="777.1" y="686.3" font-size="9.5" fill="#222" text-anchor="middle" font-weight="normal" font-style="normal" >1</text>
<text x="815.3" y="672.8" font-size="9.5" fill="#222" text-anchor="middle" font-weight="normal" font-style="normal" >9</text>
<text x="853.4" y="659.3" font-size="9.5" fill="#222" text-anchor="middle" font-weight="normal" font-style="normal" >17</text>
<text x="891.5" y="649.1" font-size="9.5" fill="#222" text-anchor="middle" font-weight="normal" font-style="normal" >23</text>
<text x="929.6" y="644.1" font-size="9.5" fill="#222" text-anchor="middle" font-weight="normal" font-style="normal" >26</text>
<text x="967.8" y="630.5" font-size="9.5" fill="#222" text-anchor="middle" font-weight="normal" font-style="normal" >34</text>
<text x="1005.9" y="615.3" font-size="9.5" fill="#222" text-anchor="middle" font-weight="normal" font-style="normal" >43</text>
<text x="1044.0" y="601.8" font-size="9.5" fill="#222" text-anchor="middle" font-weight="normal" font-style="normal" >51</text>
<text x="1082.2" y="586.6" font-size="9.5" fill="#222" text-anchor="middle" font-weight="normal" font-style="normal" >60</text>
<text x="1120.3" y="573.1" font-size="9.5" fill="#222" text-anchor="middle" font-weight="normal" font-style="normal" >68</text>
<text x="1158.4" y="557.9" font-size="9.5" fill="#222" text-anchor="middle" font-weight="normal" font-style="normal" >77</text>
<text x="1196.6" y="544.4" font-size="9.5" fill="#222" text-anchor="middle" font-weight="normal" font-style="normal" >85</text>
<text x="1234.7" y="547.6" font-size="9.5" fill="#222" text-anchor="middle" font-weight="normal" font-style="normal" >94</text>
<text x="1272.8" y="537.5" font-size="9.5" fill="#222" text-anchor="middle" font-weight="normal" font-style="normal" >100</text>
<text x="739.0" y="684.6" font-size="9.5" fill="#222" text-anchor="middle" font-weight="normal" font-style="normal" >2</text>
<text x="777.1" y="682.9" font-size="9.5" fill="#222" text-anchor="middle" font-weight="normal" font-style="normal" >3</text>
<text x="815.3" y="627.2" font-size="9.5" fill="#222" text-anchor="middle" font-weight="normal" font-style="normal" >36</text>
<text x="853.4" y="564.6" font-size="9.5" fill="#222" text-anchor="middle" font-weight="normal" font-style="normal" >73</text>
<text x="891.5" y="537.5" font-size="9.5" fill="#222" text-anchor="middle" font-weight="normal" font-style="normal" >100</text>
<text x="739.0" y="666.0" font-size="9.5" fill="#222" text-anchor="middle" font-weight="normal" font-style="normal" >13</text>
<text x="777.1" y="666.0" font-size="9.5" fill="#222" text-anchor="middle" font-weight="normal" font-style="normal" >13</text>
<text x="815.3" y="612.0" font-size="9.5" fill="#222" text-anchor="middle" font-weight="normal" font-style="normal" >45</text>
<text x="853.4" y="608.6" font-size="9.5" fill="#222" text-anchor="middle" font-weight="normal" font-style="normal" >47</text>
<text x="891.5" y="608.6" font-size="9.5" fill="#222" text-anchor="middle" font-weight="normal" font-style="normal" >47</text>
<text x="929.6" y="608.6" font-size="9.5" fill="#222" text-anchor="middle" font-weight="normal" font-style="normal" >47</text>
<text x="967.8" y="608.6" font-size="9.5" fill="#222" text-anchor="middle" font-weight="normal" font-style="normal" >47</text>
<text x="1005.9" y="608.6" font-size="9.5" fill="#222" text-anchor="middle" font-weight="normal" font-style="normal" >47</text>
<text x="1044.0" y="608.6" font-size="9.5" fill="#222" text-anchor="middle" font-weight="normal" font-style="normal" >47</text>
<text x="1082.2" y="608.6" font-size="9.5" fill="#222" text-anchor="middle" font-weight="normal" font-style="normal" >47</text>
<text x="1120.3" y="608.6" font-size="9.5" fill="#222" text-anchor="middle" font-weight="normal" font-style="normal" >47</text>
<text x="1158.4" y="608.6" font-size="9.5" fill="#222" text-anchor="middle" font-weight="normal" font-style="normal" >47</text>
<text x="1196.6" y="608.6" font-size="9.5" fill="#222" text-anchor="middle" font-weight="normal" font-style="normal" >47</text>
<text x="1234.7" y="608.6" font-size="9.5" fill="#222" text-anchor="middle" font-weight="normal" font-style="normal" >47</text>
<text x="1272.8" y="608.6" font-size="9.5" fill="#222" text-anchor="middle" font-weight="normal" font-style="normal" >47</text>
<text x="1311.0" y="603.5" font-size="9.5" fill="#222" text-anchor="middle" font-weight="normal" font-style="normal" >50</text>
<path d="M902.5,743.5 H913.5" stroke="#a13c3c" stroke-width="1.5"/><circle cx="908.0" cy="743.5" r="4" fill="#a13c3c"/>
<text x="919.7" y="747" font-size="10" fill="#333" text-anchor="start" font-weight="normal" font-style="normal" letter-spacing="0.1">Planificado</text>
<path d="M986,743.5 H997" stroke="#0000ee" stroke-width="1.5"/><circle cx="991.5" cy="743.5" r="4" fill="#0000ee"/>
<text x="1002.6" y="747" font-size="10" fill="#333" text-anchor="start" font-weight="normal" font-style="normal" letter-spacing="0.1">Reprogramado</text>
<path d="M1088,743.5 H1099" stroke="#00c800" stroke-width="1.5"/><circle cx="1093.5" cy="743.5" r="4" fill="#00c800"/>
<text x="1104.5" y="747" font-size="10" fill="#333" text-anchor="start" font-weight="normal" font-style="normal" letter-spacing="0.1">Realizado</text>
</svg>
</body></html>
